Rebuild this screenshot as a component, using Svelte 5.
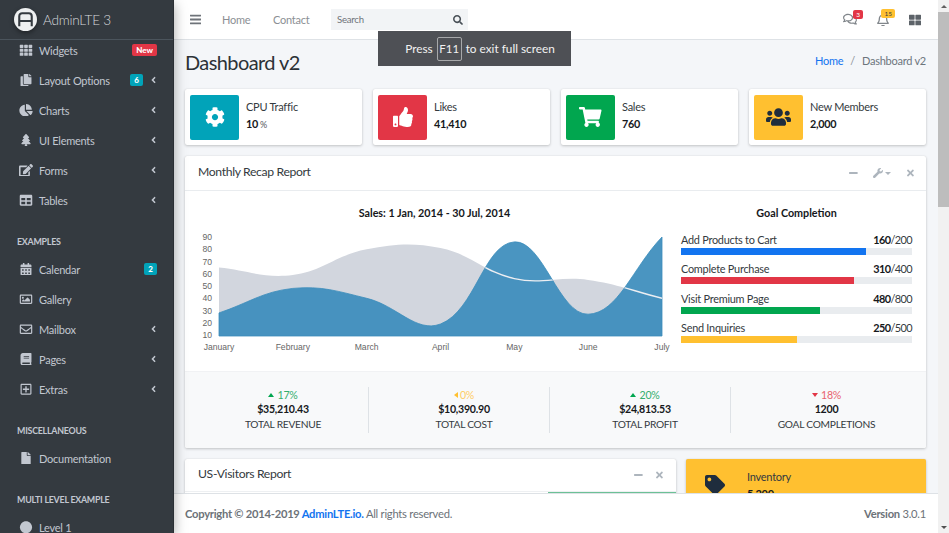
<script>
  const icons = {
    bars: [448, "M16 132h416c8.837 0 16-7.163 16-16V76c0-8.837-7.163-16-16-16H16C7.163 60 0 67.163 0 76v40c0 8.837 7.163 16 16 16zm0 160h416c8.837 0 16-7.163 16-16v-40c0-8.837-7.163-16-16-16H16c-8.837 0-16 7.163-16 16v40c0 8.837 7.163 16 16 16zm0 160h416c8.837 0 16-7.163 16-16v-40c0-8.837-7.163-16-16-16H16c-8.837 0-16 7.163-16 16v40c0 8.837 7.163 16 16 16z"],
    search: [512, "M505 442.7L405.3 343c-4.5-4.5-10.6-7-17-7H372c27.6-35.3 44-79.7 44-128C416 93.1 322.9 0 208 0S0 93.1 0 208s93.1 208 208 208c48.3 0 92.7-16.4 128-44v16.3c0 6.4 2.5 12.5 7 17l99.7 99.7c9.4 9.4 24.6 9.4 33.9 0l28.3-28.3c9.4-9.4 9.4-24.6.1-34zM208 336c-70.7 0-128-57.2-128-128 0-70.7 57.2-128 128-128 70.7 0 128 57.2 128 128 0 70.7-57.2 128-128 128z"],
    cog: [512, "M487.4 315.7l-42.6-24.6c4.3-23.2 4.3-47 0-70.2l42.6-24.6c4.9-2.8 7.1-8.6 5.5-14-11.1-35.6-30-67.8-54.7-94.6-3.8-4.1-10-5.1-14.8-2.3L380.8 110c-17.9-15.4-38.5-27.3-60.8-35.1V25.8c0-5.6-3.9-10.5-9.4-11.7-36.7-8.2-74.3-7.8-109.2 0-5.5 1.2-9.4 6.1-9.4 11.7V75c-22.2 7.9-42.8 19.8-60.8 35.1L88.7 85.5c-4.9-2.8-11-1.9-14.8 2.3-24.7 26.7-43.6 58.9-54.7 94.6-1.7 5.4.6 11.2 5.5 14L67.3 221c-4.3 23.2-4.3 47 0 70.2l-42.6 24.6c-4.9 2.8-7.1 8.6-5.5 14 11.1 35.6 30 67.8 54.7 94.6 3.8 4.1 10 5.1 14.8 2.3l42.6-24.6c17.9 15.4 38.5 27.3 60.8 35.1v49.2c0 5.6 3.9 10.5 9.4 11.7 36.7 8.2 74.3 7.8 109.2 0 5.5-1.2 9.4-6.1 9.4-11.7v-49.2c22.2-7.9 42.8-19.8 60.8-35.1l42.6 24.6c4.9 2.8 11 1.9 14.8-2.3 24.7-26.7 43.6-58.9 54.7-94.6 1.5-5.5-.7-11.3-5.6-14.1zM256 336c-44.1 0-80-35.9-80-80s35.9-80 80-80 80 35.9 80 80-35.9 80-80 80z"],
    thumbs: [512, "M104 224H24c-13.255 0-24 10.745-24 24v240c0 13.255 10.745 24 24 24h80c13.255 0 24-10.745 24-24V248c0-13.255-10.745-24-24-24zM64 472c-13.255 0-24-10.745-24-24s10.745-24 24-24 24 10.745 24 24-10.745 24-24 24zM384 81.452c0 42.416-25.97 66.208-33.277 94.548h101.723c33.397 0 59.397 27.746 59.553 58.098.084 17.938-7.546 37.249-19.439 49.197l-.11.11c9.836 23.337 8.237 56.037-9.308 79.469 8.681 25.895-.069 57.704-16.382 74.757 4.298 17.598 2.244 32.575-6.148 44.632C440.202 511.587 389.616 512 346.839 512l-2.845-.001c-48.287-.017-87.806-17.598-119.56-31.725-15.957-7.099-36.821-15.887-52.651-16.178-6.54-.12-11.783-5.457-11.783-11.998v-213.77c0-3.2 1.282-6.271 3.558-8.521 39.614-39.144 56.648-80.587 89.117-113.111 14.804-14.832 20.188-37.236 25.393-58.902C282.515 39.293 291.817 0 312 0c24 0 72 8 72 81.452z"],
    cart: [576, "M528.12 301.319l47.273-208C578.806 78.301 567.391 64 551.99 64H159.208l-9.166-44.81C147.758 8.021 137.93 0 126.529 0H24C10.745 0 0 10.745 0 24v16c0 13.255 10.745 24 24 24h69.883l70.248 343.435C147.325 417.1 136 435.222 136 456c0 30.928 25.072 56 56 56s56-25.072 56-56c0-15.674-6.447-29.835-16.824-40h209.647C430.447 426.165 424 440.326 424 456c0 30.928 25.072 56 56 56s56-25.072 56-56c0-22.172-12.888-41.332-31.579-50.405l5.517-24.276c3.413-15.018-8.002-29.319-23.403-29.319H218.117l-6.545-32h293.145c11.206 0 20.92-7.754 23.403-18.681z"],
    users: [640, "M96 224c35.3 0 64-28.7 64-64s-28.7-64-64-64-64 28.7-64 64 28.7 64 64 64zm448 0c35.3 0 64-28.7 64-64s-28.7-64-64-64-64 28.7-64 64 28.7 64 64 64zm32 32h-64c-17.6 0-33.5 7.1-45.1 18.6 40.3 22.1 68.9 62 75.1 109.4h66c17.7 0 32-14.3 32-32v-32c0-35.3-28.7-64-64-64zm-256 0c61.9 0 112-50.1 112-112S381.9 32 320 32 208 82.1 208 144s50.1 112 112 112zm76.8 32h-8.3c-20.8 10-43.9 16-68.5 16s-47.6-6-68.5-16h-8.3C179.6 288 128 339.6 128 403.2V432c0 26.5 21.5 48 48 48h288c26.5 0 48-21.5 48-48v-28.8c0-63.6-51.6-115.2-115.2-115.2zm-223.7-13.4C161.5 263.1 145.6 256 128 256H64c-35.3 0-64 28.7-64 64v32c0 17.7 14.3 32 32 32h65.9c6.3-47.4 34.9-87.3 75.2-109.4z"],
    tag: [512, "M0 252.118V48C0 21.49 21.49 0 48 0h204.118a48 48 0 0 1 33.941 14.059l211.882 211.882c18.745 18.745 18.745 49.137 0 67.882L293.823 497.941c-18.745 18.745-49.137 18.745-67.882 0L14.059 286.059A48 48 0 0 1 0 252.118zM112 64c-26.51 0-48 21.49-48 48s21.49 48 48 48 48-21.49 48-48-21.49-48-48-48z"],
    times: [352, "M242.72 256l100.07-100.07c12.28-12.28 12.28-32.19 0-44.48l-22.24-22.24c-12.28-12.28-32.19-12.28-44.48 0L176 189.28 75.93 89.21c-12.28-12.28-32.19-12.28-44.48 0L9.21 111.45c-12.28 12.28-12.28 32.19 0 44.48L109.28 256 9.21 356.07c-12.28 12.28-12.28 32.19 0 44.48l22.24 22.24c12.28 12.28 32.2 12.28 44.48 0L176 322.72l100.07 100.07c12.28 12.28 32.2 12.28 44.48 0l22.24-22.24c12.28-12.28 12.28-32.19 0-44.48L242.72 256z"],
    minus: [448, "M416 208H32c-17.67 0-32 14.33-32 32v32c0 17.67 14.33 32 32 32h384c17.67 0 32-14.33 32-32v-32c0-17.67-14.33-32-32-32z"],
    wrench: [512, "M507.73 109.1c-2.24-9.03-13.54-12.09-20.12-5.51l-74.36 74.36-67.88-11.31-11.31-67.88 74.36-74.36c6.62-6.62 3.43-17.9-5.66-20.16-47.38-11.74-99.55.91-136.58 37.93-39.64 39.64-50.55 97.1-34.05 147.2L18.74 402.76c-24.99 24.99-24.99 65.51 0 90.5 24.99 24.99 65.51 24.99 90.5 0l213.21-213.21c50.12 16.71 107.47 5.68 147.37-34.22 37.07-37.07 49.7-89.32 37.91-136.73z"],
    thlarge: [512, "M296 32h192c13.255 0 24 10.745 24 24v160c0 13.255-10.745 24-24 24H296c-13.255 0-24-10.745-24-24V56c0-13.255 10.745-24 24-24zm-80 0H24C10.745 32 0 42.745 0 56v160c0 13.255 10.745 24 24 24h192c13.255 0 24-10.745 24-24V56c0-13.255-10.745-24-24-24zM0 296v160c0 13.255 10.745 24 24 24h192c13.255 0 24-10.745 24-24V296c0-13.255-10.745-24-24-24H24c-13.255 0-24 10.745-24 24zm296 184h192c13.255 0 24-10.745 24-24V296c0-13.255-10.745-24-24-24H296c-13.255 0-24 10.745-24 24v160c0 13.255 10.745 24 24 24z"],
    th: [512, "M149.333 56v80c0 13.255-10.745 24-24 24H24c-13.255 0-24-10.745-24-24V56c0-13.255 10.745-24 24-24h101.333c13.255 0 24 10.745 24 24zm181.334 240v-80c0-13.255-10.745-24-24-24H205.333c-13.255 0-24 10.745-24 24v80c0 13.255 10.745 24 24 24h101.333c13.256 0 24.001-10.745 24.001-24zm32-240v80c0 13.255 10.745 24 24 24H488c13.255 0 24-10.745 24-24V56c0-13.255-10.745-24-24-24H386.667c-13.255 0-24 10.745-24 24zm-32 80V56c0-13.255-10.745-24-24-24H205.333c-13.255 0-24 10.745-24 24v80c0 13.255 10.745 24 24 24h101.333c13.256 0 24.001-10.745 24.001-24zm-205.334 56H24c-13.255 0-24 10.745-24 24v80c0 13.255 10.745 24 24 24h101.333c13.255 0 24-10.745 24-24v-80c0-13.255-10.745-24-24-24zM0 376v80c0 13.255 10.745 24 24 24h101.333c13.255 0 24-10.745 24-24v-80c0-13.255-10.745-24-24-24H24c-13.255 0-24 10.745-24 24zm386.667-56H488c13.255 0 24-10.745 24-24v-80c0-13.255-10.745-24-24-24H386.667c-13.255 0-24 10.745-24 24v80c0 13.255 10.745 24 24 24zm0 160H488c13.255 0 24-10.745 24-24v-80c0-13.255-10.745-24-24-24H386.667c-13.255 0-24 10.745-24 24v80c0 13.255 10.745 24 24 24zM181.333 376v80c0 13.255 10.745 24 24 24h101.333c13.255 0 24-10.745 24-24v-80c0-13.255-10.745-24-24-24H205.333c-13.255 0-24 10.745-24 24z"],
    copy: [448, "M320 448v40c0 13.255-10.745 24-24 24H24c-13.255 0-24-10.745-24-24V120c0-13.255 10.745-24 24-24h72v296c0 30.879 25.121 56 56 56h168zm0-344V0H152c-13.255 0-24 10.745-24 24v368c0 13.255 10.745 24 24 24h272c13.255 0 24-10.745 24-24V128H344c-13.2 0-24-10.8-24-24zm120.971-31.029L375.029 7.029A24 24 0 0 0 358.059 0H352v96h96v-6.059a24 24 0 0 0-7.029-16.97z"],
    pie: [544, "M527.79 288H290.5l158.03 158.03c6.04 6.04 15.98 6.53 22.19.68 38.7-36.46 65.32-85.61 73.13-140.86 1.34-9.46-6.51-17.85-16.06-17.85zm-15.83-64.8C503.72 103.74 408.26 8.28 288.8.04 279.68-.59 272 7.1 272 16.24V240h223.77c9.14 0 16.82-7.68 16.19-16.8zM224 288V50.71c0-9.55-8.39-17.4-17.84-16.06C86.99 51.49-4.1 155.6.14 280.37 4.5 408.51 114.83 513.59 243.03 511.98c50.4-.63 96.97-16.87 135.26-44.03 7.9-5.6 8.42-17.23 1.57-24.08L224 288z"],
    tree: [384, "M378.31 378.49L298.42 288h30.63c9.01 0 16.98-5 20.78-13.06 3.8-8.04 2.55-17.26-3.28-24.05L268.42 160h28.89c9.1 0 17.3-5.35 20.86-13.61 3.52-8.13 1.86-17.59-4.24-24.08L203.66 4.83c-6.03-6.45-17.28-6.45-23.32 0L70.06 122.31c-6.1 6.49-7.75 15.95-4.24 24.08C69.38 154.65 77.59 160 86.69 160h28.89l-78.14 90.91c-5.81 6.78-7.06 15.99-3.27 24.04C37.97 283 45.93 288 54.95 288h30.63L5.69 378.49c-6 6.79-7.36 16.09-3.56 24.26 3.75 8.05 12 13.25 21 13.25H160v24.45l-30.29 48.4c-5.32 10.64 2.42 23.16 14.31 23.16h95.96c11.89 0 19.63-12.52 14.31-23.16L224 440.45V416h136.86c9 0 17.25-5.2 21-13.25 3.81-8.17 2.45-17.47-3.55-24.26z"],
    edit: [576, "M402.6 83.2l90.2 90.2c3.8 3.8 3.8 10 0 13.8L274.4 405.6l-92.8 10.3c-12.4 1.4-22.9-9.1-21.5-21.5l10.3-92.8L388.8 83.2c3.8-3.8 10-3.8 13.8 0zm162-22.9l-48.8-48.8c-15.2-15.2-39.9-15.2-55.2 0l-35.4 35.4c-3.8 3.8-3.8 10 0 13.8l90.2 90.2c3.8 3.8 10 3.8 13.8 0l35.4-35.4c15.2-15.3 15.2-40 0-55.2zM384 346.2V448H64V128h229.8c3.2 0 6.2-1.3 8.5-3.5l40-40c7.6-7.6 2.2-20.5-8.5-20.5H48C21.5 64 0 85.5 0 112v352c0 26.5 21.5 48 48 48h352c26.5 0 48-21.5 48-48V306.2c0-10.7-12.9-16-20.5-8.5l-40 40c-2.2 2.3-3.5 5.3-3.5 8.5z"],
    table: [512, "M464 32H48C21.49 32 0 53.49 0 80v352c0 26.51 21.49 48 48 48h416c26.51 0 48-21.49 48-48V80c0-26.51-21.49-48-48-48zM224 416H64v-96h160v96zm0-160H64v-96h160v96zm224 160H288v-96h160v96zm0-160H288v-96h160v96z"],
    calendar: [448, "M0 464c0 26.5 21.5 48 48 48h352c26.5 0 48-21.5 48-48V192H0v272zm320-196c0-6.6 5.4-12 12-12h40c6.6 0 12 5.4 12 12v40c0 6.6-5.4 12-12 12h-40c-6.6 0-12-5.4-12-12v-40zm0 128c0-6.6 5.4-12 12-12h40c6.6 0 12 5.4 12 12v40c0 6.6-5.4 12-12 12h-40c-6.6 0-12-5.4-12-12v-40zM192 268c0-6.6 5.4-12 12-12h40c6.6 0 12 5.4 12 12v40c0 6.6-5.4 12-12 12h-40c-6.6 0-12-5.4-12-12v-40zm0 128c0-6.6 5.4-12 12-12h40c6.6 0 12 5.4 12 12v40c0 6.6-5.4 12-12 12h-40c-6.6 0-12-5.4-12-12v-40zM64 268c0-6.6 5.4-12 12-12h40c6.6 0 12 5.4 12 12v40c0 6.6-5.4 12-12 12H76c-6.6 0-12-5.4-12-12v-40zm0 128c0-6.6 5.4-12 12-12h40c6.6 0 12 5.4 12 12v40c0 6.6-5.4 12-12 12H76c-6.6 0-12-5.4-12-12v-40zM400 64h-48V16c0-8.8-7.2-16-16-16h-32c-8.8 0-16 7.2-16 16v48H160V16c0-8.8-7.2-16-16-16h-32c-8.8 0-16 7.2-16 16v48H48C21.5 64 0 85.5 0 112v48h448v-48c0-26.5-21.5-48-48-48z"],
    image: [512, "M464 64H48C21.49 64 0 85.49 0 112v288c0 26.51 21.49 48 48 48h416c26.51 0 48-21.49 48-48V112c0-26.51-21.49-48-48-48zm-6 336H54a6 6 0 0 1-6-6V118a6 6 0 0 1 6-6h404a6 6 0 0 1 6 6v276a6 6 0 0 1-6 6zM128 152c-22.091 0-40 17.909-40 40s17.909 40 40 40 40-17.909 40-40-17.909-40-40-40zM96 352h320v-80l-87.515-87.515c-4.686-4.686-12.284-4.686-16.971 0L192 304l-39.515-39.515c-4.686-4.686-12.284-4.686-16.971 0L96 304v48z"],
    envelope: [512, "M464 64H48C21.49 64 0 85.49 0 112v288c0 26.51 21.49 48 48 48h416c26.51 0 48-21.49 48-48V112c0-26.51-21.49-48-48-48zm0 48v40.805c-22.422 18.259-58.168 46.651-134.587 106.49-16.841 13.247-50.201 45.072-73.413 44.701-23.208.375-56.579-31.459-73.413-44.701C106.18 199.465 70.425 171.067 48 152.805V112h416zM48 400V214.398c22.914 18.251 55.409 43.862 104.938 82.646 21.857 17.205 60.134 55.186 103.062 54.955 42.717.231 80.509-37.199 103.053-54.947 49.528-38.783 82.032-64.401 104.947-82.653V400H48z"],
    book: [448, "M448 360V24c0-13.3-10.7-24-24-24H96C43 0 0 43 0 96v320c0 53 43 96 96 96h328c13.3 0 24-10.7 24-24v-16c0-7.5-3.5-14.3-8.9-18.7-4.2-15.4-4.2-59.3 0-74.7 5.4-4.3 8.9-11.1 8.9-18.6zM128 134c0-3.3 2.7-6 6-6h212c3.3 0 6 2.7 6 6v20c0 3.3-2.7 6-6 6H134c-3.3 0-6-2.7-6-6v-20zm0 64c0-3.3 2.7-6 6-6h212c3.3 0 6 2.7 6 6v20c0 3.3-2.7 6-6 6H134c-3.3 0-6-2.7-6-6v-20zm253.4 250H96c-17.7 0-32-14.3-32-32 0-17.6 14.4-32 32-32h285.4c-1.9 17.1-1.9 46.9 0 64z"],
    plus: [448, "M352 240v32c0 6.6-5.4 12-12 12h-88v88c0 6.6-5.4 12-12 12h-32c-6.6 0-12-5.4-12-12v-88h-88c-6.6 0-12-5.4-12-12v-32c0-6.6 5.4-12 12-12h88v-88c0-6.6 5.4-12 12-12h32c6.6 0 12 5.4 12 12v88h88c6.6 0 12 5.4 12 12zm96-160v352c0 26.5-21.5 48-48 48H48c-26.5 0-48-21.5-48-48V80c0-26.5 21.5-48 48-48h352c26.5 0 48 21.5 48 48zm-48 346V86c0-3.3-2.7-6-6-6H54c-3.3 0-6 2.7-6 6v340c0 3.3 2.7 6 6 6h340c3.3 0 6-2.7 6-6z"],
    file: [384, "M224 136V0H24C10.7 0 0 10.7 0 24v464c0 13.3 10.7 24 24 24h336c13.3 0 24-10.7 24-24V160H248c-13.2 0-24-10.8-24-24zm160-14.1v6.1H256V0h6.1c6.4 0 12.5 2.5 17 7l97.9 98c4.5 4.5 7 10.6 7 16.9z"],
    circle: [512, "M256 8C119 8 8 119 8 256s111 248 248 248 248-111 248-248S393 8 256 8z"],
    angle: [256, "M31.7 239l136-136c9.4-9.4 24.6-9.4 33.9 0l22.6 22.6c9.4 9.4 9.4 24.6 0 33.9L127.9 256l96.4 96.4c9.4 9.4 9.4 24.6 0 33.9L201.7 409c-9.4 9.4-24.6 9.4-33.9 0l-136-136c-9.5-9.4-9.5-24.6-.1-34z"],
    comments: [576, "M532 386.2c27.5-27.1 44-61.1 44-98.2 0-80-76.5-146.1-176.2-157.9C368.3 72.5 294.3 32 208 32 93.1 32 0 103.6 0 192c0 37 16.5 71 44 98.2-15.3 30.7-37.3 54.5-37.7 54.9-6.3 6.7-8.1 16.5-4.4 25 3.6 8.5 12 14 21.2 14 53.5 0 96.7-20.2 125.2-38.8 9.2 2.1 18.7 3.7 28.4 4.9C208.1 407.6 281.8 448 368 448c20.8 0 40.8-2.4 59.8-6.8C456.3 459.7 499.4 480 553 480c9.2 0 17.5-5.5 21.2-14 3.6-8.5 1.9-18.3-4.4-25-.4-.3-22.5-24.1-37.8-54.8zm-392.8-92.3L122.1 305c-14.1 9.1-28.5 16.3-43.1 21.4 2.7-4.7 5.4-9.7 8-14.8l15.5-31.1L77.7 256C64.2 242.6 48 220.7 48 192c0-60.7 73.3-112 160-112s160 51.3 160 112-73.3 112-160 112c-16.5 0-33-1.9-49-5.6l-19.8-4.5zM498.3 352l-24.7 24.4 15.5 31.1c2.6 5.1 5.3 10.1 8 14.8-14.6-5.1-29-12.3-43.1-21.4l-17.1-11.1-19.9 4.6c-16 3.7-32.5 5.6-49 5.6-54 0-102.2-20.1-131.3-49.7C338 339.5 416 272.9 416 192c0-3.4-.4-6.7-.7-10C479.7 196.5 528 238.8 528 288c0 28.7-16.2 50.6-29.7 64z"],
    bell: [448, "M439.39 362.29c-19.32-20.76-55.47-51.99-55.47-154.29 0-77.7-54.48-139.9-127.94-155.16V32c0-17.67-14.32-32-31.98-32s-31.98 14.33-31.98 32v20.84C118.56 68.1 64.08 130.3 64.08 208c0 102.3-36.15 133.53-55.47 154.29-6 6.45-8.66 14.16-8.61 21.71.11 16.4 12.98 32 32.1 32h383.8c19.12 0 32-15.6 32.1-32 .05-7.55-2.61-15.27-8.61-21.71zM67.53 368c21.22-27.97 44.42-74.33 44.53-159.42 0-.2-.06-.38-.06-.58 0-61.86 50.14-112 112-112s112 50.14 112 112c0 .2-.06.38-.06.58.11 85.1 23.31 131.46 44.53 159.42H67.53zM224 512c35.32 0 63.97-28.65 63.97-64H160.03c0 35.35 28.65 64 63.97 64z"]
  };

  const menu = [
    { t: "Widgets", i: "th", badge: "New", bc: "red" },
    { t: "Layout Options", i: "copy", badge: "6", bc: "teal", arrow: true },
    { t: "Charts", i: "pie", arrow: true },
    { t: "UI Elements", i: "tree", arrow: true },
    { t: "Forms", i: "edit", arrow: true },
    { t: "Tables", i: "table", arrow: true },
    { h: "EXAMPLES" },
    { t: "Calendar", i: "calendar", badge: "2", bc: "teal" },
    { t: "Gallery", i: "image" },
    { t: "Mailbox", i: "envelope", arrow: true },
    { t: "Pages", i: "book", arrow: true },
    { t: "Extras", i: "plus", arrow: true },
    { h: "MISCELLANEOUS" },
    { t: "Documentation", i: "file" },
    { h: "MULTI LEVEL EXAMPLE" },
    { t: "Level 1", i: "circle" }
  ];

  const boxes = [
    { t: "CPU Traffic", v: "10", u: " %", i: "cog", c: "teal" },
    { t: "Likes", v: "41,410", i: "thumbs", c: "red" },
    { t: "Sales", v: "760", i: "cart", c: "green" },
    { t: "New Members", v: "2,000", i: "users", c: "yellow" }
  ];

  const goals = [
    { t: "Add Products to Cart", a: 160, b: 200, p: 80, c: "blue" },
    { t: "Complete Purchase", a: 310, b: 400, p: 75, c: "red" },
    { t: "Visit Premium Page", a: 480, b: 800, p: 60, c: "green" },
    { t: "Send Inquiries", a: 250, b: 500, p: 50, c: "yellow" }
  ];

  const stats = [
    { p: "17%", dir: "up", c: "up", v: "$35,210.43", l: "TOTAL REVENUE" },
    { p: "0%", dir: "left", c: "flat", v: "$10,390.90", l: "TOTAL COST" },
    { p: "20%", dir: "up", c: "up", v: "$24,813.53", l: "TOTAL PROFIT" },
    { p: "18%", dir: "down", c: "down", v: "1200", l: "GOAL COMPLETIONS" }
  ];

  const months = ["January", "February", "March", "April", "May", "June", "July"];
  const xs = months.map((_, i) => 219 + i * 73.83);
  const yOf = (v) => 335 - (v - 10) * 1.225;
  const ticks = [90, 80, 70, 60, 50, 40, 30, 20, 10];

  function spline(data) {
    const p = data.map((v, i) => [xs[i], yOf(v)]);
    const t = 0.4;
    const ctrl = p.map((c, i) => {
      const a = p[i - 1] || c;
      const b = p[i + 1] || c;
      const d1 = Math.hypot(c[0] - a[0], c[1] - a[1]);
      const d2 = Math.hypot(b[0] - c[0], b[1] - c[1]);
      const s = d1 + d2 || 1;
      return {
        prev: [c[0] - (t * d1 / s) * (b[0] - a[0]), c[1] - (t * d1 / s) * (b[1] - a[1])],
        next: [c[0] + (t * d2 / s) * (b[0] - a[0]), c[1] + (t * d2 / s) * (b[1] - a[1])]
      };
    });
    let d = `M${p[0][0].toFixed(1)} ${p[0][1].toFixed(1)}`;
    for (let i = 1; i < p.length; i++) {
      const n = ctrl[i - 1].next;
      const q = ctrl[i].prev;
      d += `C${n[0].toFixed(1)} ${n[1].toFixed(1)} ${q[0].toFixed(1)} ${q[1].toFixed(1)} ${p[i][0].toFixed(1)} ${p[i][1].toFixed(1)}`;
    }
    return d;
  }
  const base = `L${xs[6].toFixed(1)} 336L${xs[0].toFixed(1)} 336Z`;
  const grayLine = spline([65, 59, 80, 81, 56, 55, 40]);
  const blueLine = spline([28, 48, 40, 19, 86, 27, 90]);
</script>

{#snippet icon(name)}
  <svg viewBox={`0 0 ${icons[name][0]} 512`} aria-hidden="true"><path d={icons[name][1]} /></svg>
{/snippet}

<div class="shell">
  <aside class="sidebar">
    <div class="brand">
      <span class="logo">
        <svg viewBox="-12 -12 24 24" aria-hidden="true">
          <path d="M-6.5 7V-3.5a3 3 0 0 1 3-3h7a3 3 0 0 1 3 3V7M-6.5 1.5h13" />
        </svg>
      </span>
      <span class="brand-text">AdminLTE 3</span>
    </div>
    <nav class="menu">
      {#each menu as m}
        {#if m.h}
          <div class="menu-head">{m.h}</div>
        {:else}
          <div class="menu-row">
            <span class="menu-icon">{@render icon(m.i)}</span>
            <span class="menu-text">{m.t}</span>
            {#if m.badge}<span class="badge {m.bc}">{m.badge}</span>{/if}
            {#if m.arrow}<span class="menu-arrow">{@render icon("angle")}</span>{/if}
          </div>
        {/if}
      {/each}
    </nav>
  </aside>

  <div class="main">
    <header class="navbar">
      <span class="burger">{@render icon("bars")}</span>
      <a class="nav-link home" href="#home">Home</a>
      <a class="nav-link contact" href="#contact">Contact</a>
      <div class="search">
        <span>Search</span>
        <span class="search-icon">{@render icon("search")}</span>
      </div>
      <div class="nav-right">
        <span class="nav-icon comments">{@render icon("comments")}<b class="count red">3</b></span>
        <span class="nav-icon bell">{@render icon("bell")}<b class="count yellow">15</b></span>
        <span class="nav-icon grid">{@render icon("thlarge")}</span>
      </div>
    </header>

    <div class="content">
      <div class="page-head">
        <h1>Dashboard v2</h1>
        <div class="crumbs"><a href="#home">Home</a><i>/</i><span>Dashboard v2</span></div>
      </div>

      <section class="boxes">
        {#each boxes as b}
          <div class="info-box">
            <div class="info-icon {b.c}">{@render icon(b.i)}</div>
            <div class="info-text">
              <div>{b.t}</div>
              <strong>{b.v}{#if b.u}<small>{b.u}</small>{/if}</strong>
            </div>
          </div>
        {/each}
      </section>

      <section class="card recap">
        <div class="card-head">
          <h2>Monthly Recap Report</h2>
          <div class="tools">
            <span class="tool minus">{@render icon("minus")}</span>
            <span class="tool wrench">{@render icon("wrench")}<em class="caret"></em></span>
            <span class="tool close">{@render icon("times")}</span>
          </div>
        </div>
        <div class="recap-body">
          <div class="chart-col">
            <div class="col-title">Sales: 1 Jan, 2014 - 30 Jul, 2014</div>
            <svg class="chart" viewBox="198 228 473 125" aria-label="Sales chart">
              <defs>
                <clipPath id="blueclip"><path d={blueLine + base} /></clipPath>
              </defs>
              {#each ticks as t}
                <text class="tick" x="212" y={yOf(t) + 3} text-anchor="end">{t}</text>
              {/each}
              {#each months as m, i}
                <text class="tick" x={xs[i]} y="350" text-anchor="middle">{m}</text>
              {/each}
              <path d={grayLine + base} fill="#d2d6de" />
              <path d={blueLine + base} fill="#3c8dbc" fill-opacity="0.93" stroke="#3c8dbc" stroke-opacity="0.8" />
              <path d={grayLine} fill="none" stroke="#eceef2" stroke-width="1.4" clip-path="url(#blueclip)" />
            </svg>
          </div>
          <div class="goal-col">
            <div class="col-title">Goal Completion</div>
            {#each goals as g}
              <div class="goal">
                <div class="goal-label"><span>{g.t}</span><span class="goal-num"><b>{g.a}</b>/{g.b}</span></div>
                <div class="track"><div class="fill {g.c}" style="width: {g.p}%"></div></div>
              </div>
            {/each}
          </div>
        </div>
        <div class="stats">
          {#each stats as s, i}
            <div class="stat" class:last={i === 3}>
              <div class="pct {s.c}"><em class="arrow {s.dir}"></em>{s.p}</div>
              <strong>{s.v}</strong>
              <div class="stat-label">{s.l}</div>
            </div>
          {/each}
        </div>
      </section>

      <section class="lower">
        <div class="card visitors">
          <div class="card-head low">
            <h2>US-Visitors Report</h2>
            <div class="tools">
              <span class="tool minus">{@render icon("minus")}</span>
              <span class="tool close">{@render icon("times")}</span>
            </div>
          </div>
          <div class="visitors-body"><div class="green-strip"></div></div>
        </div>
        <div class="inventory">
          <span class="inv-icon">{@render icon("tag")}</span>
          <div class="inv-text">
            <div>Inventory</div>
            <strong>5,200</strong>
          </div>
        </div>
      </section>
    </div>

    <footer class="footer">
      <div><b>Copyright © 2014-2019 <a href="#io">AdminLTE.io.</a></b> All rights reserved.</div>
      <div><b>Version</b> 3.0.1</div>
    </footer>
  </div>

  <div class="scrollbar">
    <span class="arrow-btn"><em class="tri-up"></em></span>
    <div class="thumb"></div>
    <span class="arrow-btn end"><em class="tri-down"></em></span>
  </div>

  <div class="fullscreen">Press <kbd>F11</kbd> to exit full screen</div>
</div>

<style>
  :global(body) { margin: 0; background: #f4f6f9; }
  .shell {
    position: relative;
    display: flex;
    height: 533px;
    overflow: hidden;
    font-family: Lato, "Noto Sans", sans-serif;
    font-size: 11px;
    letter-spacing: -0.25px;
    color: #343a40;
  }
  a { text-decoration: none; }
  svg { display: block; fill: currentColor; }

  .sidebar {
    position: relative;
    z-index: 3;
    flex: 0 0 173px;
    background: #343a40;
    color: #c2c7d0;
    box-shadow: 0 4px 12px rgba(0, 0, 0, 0.35);
    border-right: 1px solid #2a2f34;
  }
  .brand {
    position: relative;
    z-index: 1;
    display: flex;
    align-items: center;
    gap: 6px;
    height: 39px;
    padding-left: 14px;
    background: #343a40;
    border-bottom: 1px solid #4b545c;
  }
  .logo {
    display: flex;
    width: 23px;
    height: 23px;
    border-radius: 50%;
    background: #eef0f1;
    box-shadow: 0 2px 5px rgba(0, 0, 0, 0.4);
  }
  .logo svg { width: 23px; height: 23px; fill: none; stroke: #343a40; stroke-width: 2.2; }
  .brand-text { font-size: 13.6px; font-weight: 300; color: #d5d8dc; }
  .menu { margin-top: -5px; }
  .menu-row {
    display: flex;
    align-items: center;
    height: 30px;
    padding-left: 19px;
    padding-right: 16px;
  }
  .menu-icon { flex: 0 0 20px; display: flex; }
  .menu-icon svg { height: 12.5px; width: 14px; }
  .menu-text { flex: 1; font-size: 11px; }
  .menu-arrow { display: flex; margin-left: 7px; width: 7px; }
  .menu-arrow svg { height: 10px; width: 7px; }
  .menu-head {
    padding: 22px 0 0 17px;
    height: 39px;
    font-size: 8.9px;
    line-height: 10px;
    font-weight: 700;
    color: #c2c7d0;
    box-sizing: border-box;
  }
  .badge {
    font-size: 8px;
    font-weight: 900;
    line-height: 12px;
    color: #fff;
    border-radius: 2px;
    padding: 0 4px;
    text-align: center;
    letter-spacing: 0;
  }
  .teal { background: #01a3b9; }
  .red { background: #e23646; }
  .green { background: #01a64f; }
  .yellow { background: #ffc030; }
  .blue { background: #1274f0; }

  .main {
    flex: 1;
    min-width: 0;
    display: flex;
    flex-direction: column;
  }
  .navbar {
    flex: 0 0 39px;
    display: flex;
    align-items: center;
    background: #fff;
    border-bottom: 1px solid #dee2e6;
    padding-left: 16px;
    color: #6e7379;
  }
  .burger { width: 11px; margin-right: 21px; }
  .burger svg { width: 11px; height: 13px; }
  .nav-link { color: #8b8f94; font-size: 11px; display: block; }
  .nav-link.home { width: 51px; }
  .nav-link.contact { width: 58px; }
  .search {
    display: flex;
    align-items: center;
    justify-content: space-between;
    width: 137px;
    height: 21px;
    padding: 0 5px 0 6px;
    box-sizing: border-box;
    background: #f2f4f6;
    color: #6e7379;
    font-size: 9.6px;
  }
  .search-icon svg { width: 10px; height: 10px; color: #495057; }
  .nav-right {
    margin-left: auto;
    display: flex;
    align-items: center;
    padding-right: 17px;
  }
  .nav-icon { position: relative; display: block; }
  .nav-icon svg { height: 12.4px; width: 14px; color: #81868b; }
  .comments { margin-right: 20px; }
  .bell { margin-right: 20px; }
  .bell svg { height: 13.7px; width: 12px; }
  .grid svg { height: 12px; width: 12px; color: #5d6369; }
  .count {
    position: absolute;
    top: -3px;
    right: -6px;
    font-size: 6.5px;
    line-height: 9px;
    padding: 0 3px;
    border-radius: 2px;
    color: #fff;
    font-weight: 400;
    letter-spacing: 0;
  }
  .bell .count { right: -6px; top: -4px; color: #343a40; }

  .content { flex: 1; min-height: 0; overflow: hidden; padding: 0 12px 0 11px; }
  .page-head {
    display: flex;
    align-items: center;
    justify-content: space-between;
    height: 41px;
    padding-bottom: 8px;
  }
  h1 { margin: 3px 0 0; font-size: 20px; font-weight: 400; letter-spacing: -0.6px; color: #2c3237; }
  .crumbs { display: flex; gap: 7px; font-size: 11px; color: #6c757d; }
  .crumbs a { color: #1274f0; }
  .crumbs i { font-style: normal; color: #8b9096; }

  .boxes { display: grid; grid-template-columns: repeat(4, 1fr); gap: 11px; }
  .info-box {
    display: flex;
    align-items: center;
    height: 56px;
    padding: 0 5px;
    box-sizing: border-box;
    background: #fff;
    border-radius: 2px;
    box-shadow: 0 0 1px rgba(0, 0, 0, 0.125), 0 1px 3px rgba(0, 0, 0, 0.2);
  }
  .info-icon {
    flex: 0 0 49px;
    height: 45px;
    margin-right: 7px;
    display: flex;
    align-items: center;
    justify-content: center;
    border-radius: 2px;
    color: #fff;
  }
  .info-icon svg { height: 20px; width: auto; }
  .info-icon.yellow { color: #1f2d3d; }
  .info-text { font-size: 11px; line-height: 17px; margin-top: -4px; }
  .info-text strong { color: #16181b; font-size: 10.8px; font-weight: 700; }
  .info-text small { font-size: 9px; font-weight: 400; color: #55595e; }

  .card {
    background: #fff;
    border-radius: 2px;
    box-shadow: 0 0 1px rgba(0, 0, 0, 0.125), 0 1px 3px rgba(0, 0, 0, 0.2);
  }
  .recap { margin-top: 11px; }
  .card-head {
    display: flex;
    align-items: center;
    justify-content: space-between;
    height: 34px;
    padding: 0 12px 0 13px;
    border-bottom: 1px solid #e9ecef;
  }
  h2 { margin: 0 0 3px; font-size: 12.2px; font-weight: 400; letter-spacing: -0.35px; color: #343a40; }
  .tools { display: flex; align-items: center; color: #adb5bd; }
  .tool { display: flex; align-items: center; }
  .tool svg { height: 10px; width: auto; }
  .minus { margin-right: 15px; }
  .wrench { margin-right: 16px; }
  .wrench svg { height: 10px; width: 10px; }
  .caret {
    margin-left: 2px;
    border-left: 3px solid transparent;
    border-right: 3px solid transparent;
    border-top: 3px solid #adb5bd;
  }
  .recap-body {
    display: grid;
    grid-template-columns: 473px 231px;
    column-gap: 10px;
    padding: 15px 14px 18px 13px;
  }
  .col-title { text-align: center; font-size: 10.75px; line-height: 14px; font-weight: 700; letter-spacing: 0; color: #16181b; }
  .chart { display: block; width: 473px; height: 125px; margin-top: 8px; }
  .tick { font-family: "Liberation Sans", sans-serif; font-size: 8.6px; letter-spacing: 0; fill: #666; }
  .goal-col .col-title { margin-bottom: 12px; }
  .goal { margin-bottom: 6.3px; }
  .goal-label { display: flex; justify-content: space-between; font-size: 10.9px; line-height: 16px; }
  .goal-num { letter-spacing: -0.6px; }
  .goal-label b { color: #16181b; }
  .track { height: 7px; background: #e9ecef; }
  .fill { height: 7px; }

  .stats {
    display: grid;
    grid-template-columns: repeat(4, 171px);
    column-gap: 10px;
    padding: 15px 0 15px 13px;
    background: #f8f9fa;
    border-top: 1px solid #f1f2f4;
    border-radius: 0 0 2px 2px;
  }
  .stat {
    height: 46px;
    box-sizing: border-box;
    padding-top: 0.5px;
    text-align: center;
    line-height: 14.5px;
    border-right: 1px solid #dee2e6;
  }
  .stat.last { border-right: 0; }
  .stat strong { display: block; color: #16181b; font-size: 10.6px; }
  .stat-label { font-size: 10.2px; color: #343a40; }
  .pct { font-size: 10.6px; display: flex; align-items: center; justify-content: center; gap: 3px; }
  .pct.up { color: #34ae6d; }
  .pct.flat { color: #ffcd66; }
  .pct.down { color: #e8636e; }
  .arrow { display: block; width: 0; height: 0; }
  .arrow.up { border: 3.5px solid transparent; border-top: 0; border-bottom: 4px solid #01a64f; }
  .arrow.down { border: 3.5px solid transparent; border-bottom: 0; border-top: 4px solid #e23646; }
  .arrow.left { border: 3.5px solid transparent; border-left: 0; border-right: 4px solid #ffc030; margin-right: -1px; }

  .lower {
    display: grid;
    grid-template-columns: 491px 240px;
    column-gap: 10px;
    margin-top: 11px;
  }
  .visitors { height: 120px; }
  .card-head.low { border-bottom: 0; padding-right: 13px; height: 32px; }
  .low .minus { margin-right: 13px; }
  .visitors-body { display: flex; justify-content: flex-end; border-top: 1px solid #eef0f2; }
  .green-strip { width: 128px; height: 40px; background: #6cc196; }
  .inventory {
    display: flex;
    align-items: flex-start;
    height: 90px;
    padding: 9px 0 0 19px;
    box-sizing: border-box;
    background: #ffc030;
    border-radius: 2px;
    box-shadow: 0 0 1px rgba(0, 0, 0, 0.125), 0 1px 3px rgba(0, 0, 0, 0.2);
  }
  .inv-icon { width: 42px; color: #1f2d3d; padding-top: 7px; }
  .inv-icon svg { width: 20px; height: 20px; }
  .inv-text { font-size: 11px; line-height: 17px; }
  .inv-text strong { color: #16181b; }

  .footer {
    flex: 0 0 39px;
    display: flex;
    align-items: center;
    justify-content: space-between;
    padding: 0 12px 0 11px;
    background: #fff;
    border-top: 1px solid #dee2e6;
    color: #6c7278;
    font-size: 11.2px;
    position: relative;
    z-index: 1;
  }
  .footer a { color: #1274f0; }

  .scrollbar {
    flex: 0 0 11px;
    display: flex;
    flex-direction: column;
    background: #f1f1f1;
    position: relative;
    z-index: 2;
  }
  .arrow-btn { height: 12px; display: flex; align-items: center; justify-content: center; }
  .arrow-btn.end { margin-top: auto; }
  .thumb { height: 195px; background: #bdbdbd; }
  .tri-up { border: 3px solid transparent; border-top: 0; border-bottom: 3px solid #606060; }
  .tri-down { border: 3px solid transparent; border-bottom: 0; border-top: 3px solid #505050; }

  .fullscreen {
    position: absolute;
    left: 378px;
    top: 31px;
    z-index: 5;
    width: 193px;
    height: 35px;
    box-sizing: border-box;
    padding-left: 11px;
    display: flex;
    align-items: center;
    justify-content: center;
    gap: 4px;
    background: #4e5055;
    color: #f2f2f2;
    font-size: 11.8px;
    letter-spacing: 0;
  }
  kbd {
    display: block;
    box-sizing: border-box;
    width: 25px;
    height: 24px;
    font-family: inherit;
    font-size: 11.4px;
    line-height: 22px;
    text-align: center;
    border: 1px solid #a7a8aa;
    border-radius: 2px;
  }
</style>
